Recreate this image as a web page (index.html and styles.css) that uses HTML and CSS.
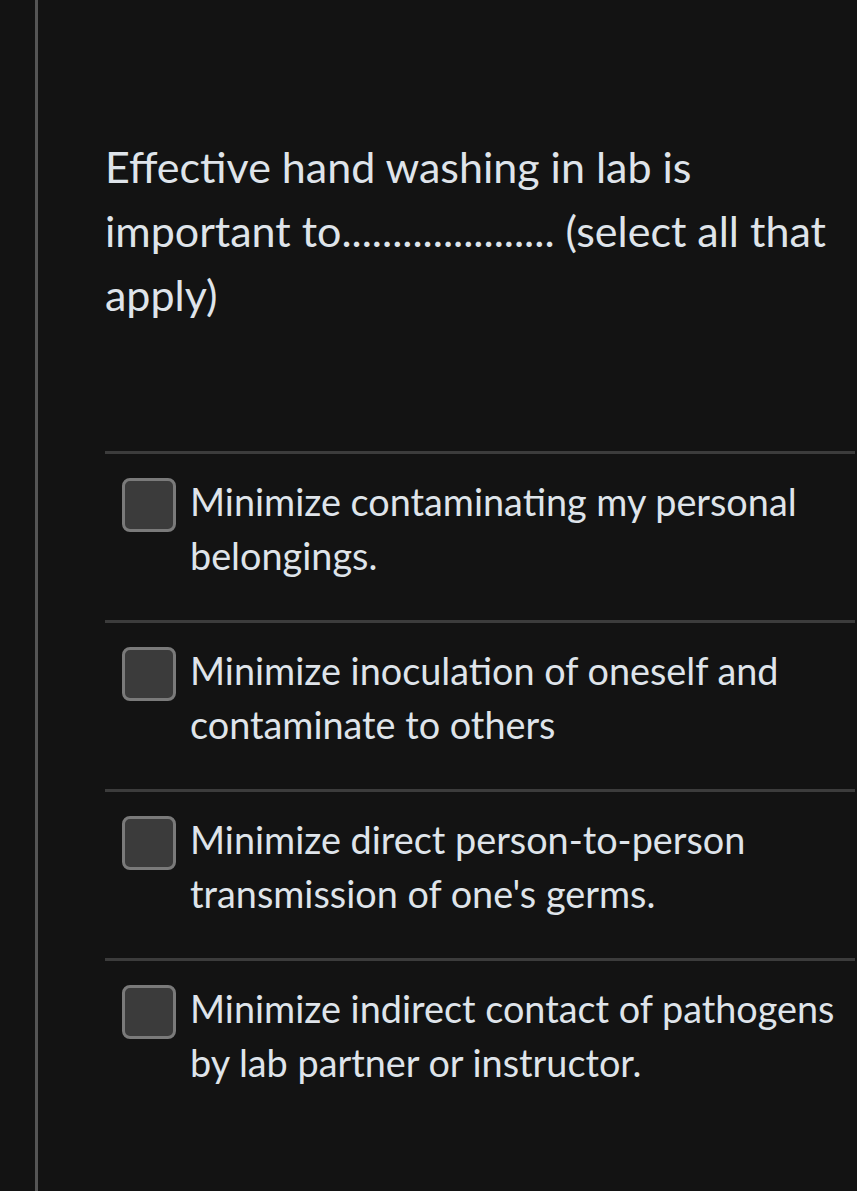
FILE: index.html
```html
<!DOCTYPE html>
<html>
<head>
<meta charset="utf-8">
<link rel="stylesheet" href="styles.css">
</head>
<body>
<div class="page">
  <div class="rail"></div>
  <main class="content">
    <p class="question">Effective hand washing in lab is important to..................... (select all that apply)</p>
    <ul class="options">
      <li class="option"><span class="box"></span><span class="label">Minimize contaminating my personal belongings.</span></li>
      <li class="option"><span class="box"></span><span class="label">Minimize inoculation of oneself and contaminate to others</span></li>
      <li class="option"><span class="box"></span><span class="label">Minimize direct person-to-person transmission of one's germs.</span></li>
      <li class="option"><span class="box"></span><span class="label">Minimize indirect contact of pathogens by lab partner or instructor.</span></li>
    </ul>
  </main>
</div>
</body>
</html>
```

FILE: styles.css
```css
html, body {
  margin: 0;
  padding: 0;
  background: #131313;
  height: 100%;
}
.page {
  display: flex;
  min-height: 1191px;
  font-family: Lato, "Noto Sans", sans-serif;
  color: #dfe4ea;
}
.rail {
  width: 35px;
  flex: none;
  border-right: 3px solid #555555;
}
.content {
  flex: 1;
  padding: 0 2px 0 67px;
}
.question {
  margin: 135px 0 0 0;
  font-size: 43px;
  line-height: 64px;
}
.options {
  list-style: none;
  margin: 124px 0 0 0;
  padding: 0;
}
.option {
  display: flex;
  align-items: flex-start;
  gap: 14px;
  border-top: 3px solid #3c3c3c;
  padding: 24px 0 34px 17px;
  min-height: 108px;
}
.box {
  flex: none;
  width: 48px;
  height: 48px;
  border: 3px solid #7a7a7a;
  border-radius: 8px;
  background: #3b3b3b;
}
.label {
  font-size: 37.8px;
  line-height: 54px;
  margin-top: -3px;
}
```
